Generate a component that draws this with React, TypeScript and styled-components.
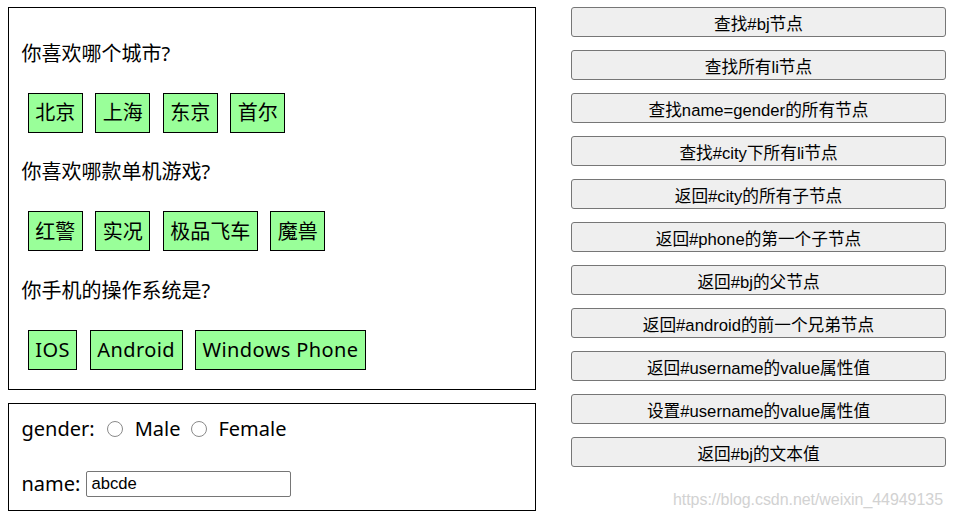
import React from "react";
import styled, { createGlobalStyle } from "styled-components";

const GlobalStyle = createGlobalStyle`
  html, body {
    margin: 0;
    padding: 0;
    background: #ffffff;
  }
  body {
    font-family: "Noto Sans", "Noto Sans CJK SC", sans-serif;
    color: #000000;
  }
`;

const Page = styled.div`
  position: relative;
  display: flex;
  align-items: flex-start;
  box-sizing: border-box;
  width: 953px;
  height: 519px;
  padding: 7px 0 0 8px;
  overflow: hidden;
`;

const Total = styled.div`
  flex: none;
  width: 563px;
  display: flex;
  flex-direction: column;
`;

const Inner = styled.div<{ $mb?: number }>`
  box-sizing: border-box;
  width: 527.5px;
  border: 1px solid #000000;
  padding: 12.5px;
  margin-bottom: ${(p) => p.$mb ?? 0}px;
  display: flex;
  flex-direction: column;
`;

const Question = styled.p`
  margin: 20px 0;
  font-size: 20px;
  line-height: 26px;
`;

const OptionList = styled.ul`
  list-style: none;
  margin: 0;
  padding: 0;
  display: flex;
  flex-wrap: wrap;
`;

const Option = styled.li<{ $latin?: boolean }>`
  border: 1px solid #000000;
  padding: 6.5px;
  margin: 6.25px;
  background: #99ff99;
  font-size: 20px;
  line-height: 25px;
  letter-spacing: ${(p) => (p.$latin ? "0.4px" : "0")};
`;

const FormRow = styled.div<{ $mt?: number }>`
  display: flex;
  align-items: center;
  height: 26.67px;
  margin-top: ${(p) => p.$mt ?? 0}px;
  font-size: 20px;
  line-height: 26.67px;
`;

const Radio = styled.input<{ $ml: number; $mr: number }>`
  appearance: none;
  -webkit-appearance: none;
  box-sizing: border-box;
  width: 16px;
  height: 16px;
  border: 1px solid #8a8a8a;
  border-radius: 50%;
  background: #ffffff;
  margin: 0 ${(p) => p.$mr}px 0 ${(p) => p.$ml}px;
  flex: none;
`;

const TextInput = styled.input`
  box-sizing: border-box;
  width: 205px;
  height: 26px;
  margin: 1px 0 0 6px;
  padding: 0 4px;
  border: 1px solid #767676;
  border-radius: 2px;
  font-family: "Liberation Sans", Arial, sans-serif;
  font-size: 16.67px;
  color: #000000;
  background: #ffffff;
  outline: none;
`;

const BtnList = styled.div`
  flex: none;
  display: flex;
  flex-direction: column;
  gap: 13px;
`;

const Button = styled.button`
  box-sizing: border-box;
  width: 375px;
  height: 30px;
  padding: 5px 0 0;
  border: 1px solid #767676;
  border-radius: 3px;
  background: #efefef;
  color: #000000;
  font-family: "Liberation Sans", "Noto Sans CJK SC", sans-serif;
  font-size: 16.67px;
  line-height: 20px;
  text-align: center;
  cursor: default;
`;

const Watermark = styled.div`
  position: absolute;
  left: 673px;
  top: 491px;
  font-family: "Liberation Sans", Arial, sans-serif;
  font-size: 16px;
  letter-spacing: -0.06px;
  color: #d2d2d2;
  white-space: nowrap;
  pointer-events: none;
`;

const questions: { q: string; items: string[]; latin?: boolean }[] = [
  { q: "你喜欢哪个城市?", items: ["北京", "上海", "东京", "首尔"] },
  { q: "你喜欢哪款单机游戏?", items: ["红警", "实况", "极品飞车", "魔兽"] },
  { q: "你手机的操作系统是?", items: ["IOS", "Android", "Windows Phone"], latin: true },
];

const buttons = [
  "查找#bj节点",
  "查找所有li节点",
  "查找name=gender的所有节点",
  "查找#city下所有li节点",
  "返回#city的所有子节点",
  "返回#phone的第一个子节点",
  "返回#bj的父节点",
  "返回#android的前一个兄弟节点",
  "返回#username的value属性值",
  "设置#username的value属性值",
  "返回#bj的文本值",
];

export default function App() {
  return (
    <>
      <GlobalStyle />
      <Page>
        <Total>
          <Inner $mb={13}>
            {questions.map((s) => (
              <React.Fragment key={s.q}>
                <Question>{s.q}</Question>
                <OptionList>
                  {s.items.map((it) => (
                    <Option key={it} $latin={s.latin}>
                      {it}
                    </Option>
                  ))}
                </OptionList>
              </React.Fragment>
            ))}
          </Inner>
          <Inner>
            <FormRow>
              <span>gender:</span>
              <Radio type="radio" name="gender" value="male" $ml={12} $mr={12} />
              <span>Male</span>
              <Radio type="radio" name="gender" value="female" $ml={11} $mr={11} />
              <span>Female</span>
            </FormRow>
            <FormRow $mt={28}>
              <span>name:</span>
              <TextInput type="text" name="name" defaultValue="abcde" />
            </FormRow>
          </Inner>
        </Total>
        <BtnList>
          {buttons.map((b) => (
            <Button key={b}>{b}</Button>
          ))}
        </BtnList>
        <Watermark>https://blog.csdn.net/weixin_44949135</Watermark>
      </Page>
    </>
  );
}
